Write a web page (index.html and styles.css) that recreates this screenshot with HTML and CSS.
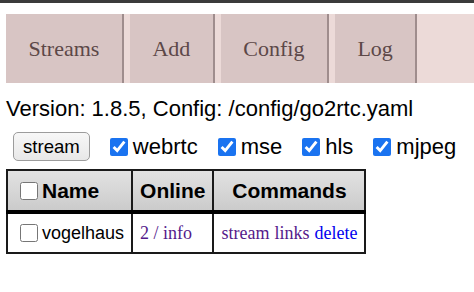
FILE: index.html
```html
<!DOCTYPE html>
<html>
<head>
<meta charset="utf-8">
<link rel="stylesheet" href="styles.css">
</head>
<body>
<div class="topbar"></div>
<nav class="nav">
  <a class="nav-item" href="#">Streams</a>
  <a class="nav-item" href="#">Add</a>
  <a class="nav-item" href="#">Config</a>
  <a class="nav-item" href="#">Log</a>
</nav>
<div class="info">Version: 1.8.5, Config: /config/go2rtc.yaml</div>
<div class="controls">
  <button class="btn">stream</button>
  <label class="opt"><input type="checkbox" checked>webrtc</label>
  <label class="opt"><input type="checkbox" checked>mse</label>
  <label class="opt"><input type="checkbox" checked>hls</label>
  <label class="opt"><input type="checkbox" checked>mjpeg</label>
</div>
<table class="streams">
  <thead>
    <tr>
      <th class="name-h"><label class="cell-label"><input type="checkbox">Name</label></th>
      <th>Online</th>
      <th>Commands</th>
    </tr>
  </thead>
  <tbody>
    <tr>
      <td><label class="cell-label"><input type="checkbox">vogelhaus</label></td>
      <td><a class="visited" href="#">2 / info</a></td>
      <td><a class="visited" href="#">stream</a> <a class="visited" href="#">links</a> <a class="link" href="#">delete</a></td>
    </tr>
  </tbody>
</table>
</body>
</html>
```
FILE: styles.css
```css
body {
  margin: 0;
  font-family: "Liberation Sans", Arial, sans-serif;
  background: #fff;
  color: #000;
}
.topbar {
  height: 3px;
  background: #3b3b3b;
}
.nav {
  display: flex;
  margin: 11px 0 0 6px;
  height: 69px;
  background: #ecdad8;
}
.nav-item {
  display: flex;
  align-items: center;
  padding: 0 22.5px;
  margin-right: 6px;
  background: #d8c5c4;
  border-right: 2px solid #9f8d8d;
  color: #5c4848;
  font-family: "Liberation Serif", "Times New Roman", serif;
  font-size: 22px;
  text-decoration: none;
}
.info {
  margin: 13px 0 0 6px;
  font-size: 22px;
}
.controls {
  display: flex;
  align-items: center;
  margin: 10px 0 0 13px;
  height: 29px;
}
.btn {
  height: 29px;
  padding: 0 9px;
  font-family: "Liberation Sans", Arial, sans-serif;
  font-size: 18.6px;
  color: #000;
  background: linear-gradient(#f7f7f7, #e8e8e8);
  border: 1px solid #9c9c9c;
  border-radius: 5px;
}
.opt {
  display: flex;
  align-items: center;
  margin-left: 20px;
  font-size: 22px;
}
.opt input {
  width: 18px;
  height: 18px;
  margin: 0 5px 0 0;
  accent-color: #1a73f0;
}
.streams {
  margin: 8px 0 0 6px;
  border-collapse: collapse;
  background: #fff;
}
.streams th,
.streams td {
  border: 2px solid #1a1a1a;
  padding: 0 7px;
  white-space: nowrap;
}
.streams thead tr {
  height: 42px;
}
.streams tbody tr {
  height: 41px;
}
.streams th {
  background: linear-gradient(#e2e2e2, #d3d3d3 66%, #cbcbcb);
  font-size: 21px;
  font-weight: bold;
  text-align: center;
  border-bottom: 4px solid #000;
}
.streams th.name-h {
  text-align: left;
}
.streams td {
  font-size: 18px;
}
.cell-label {
  display: flex;
  align-items: center;
}
.cell-label input {
  width: 18px;
  height: 18px;
  margin: 0 4px 0 5px;
}
.visited,
.link {
  font-family: "Liberation Serif", "Times New Roman", serif;
  font-size: 18px;
  text-decoration: none;
}
.visited {
  color: #551a8b;
}
.link {
  color: #0000ee;
}
```
